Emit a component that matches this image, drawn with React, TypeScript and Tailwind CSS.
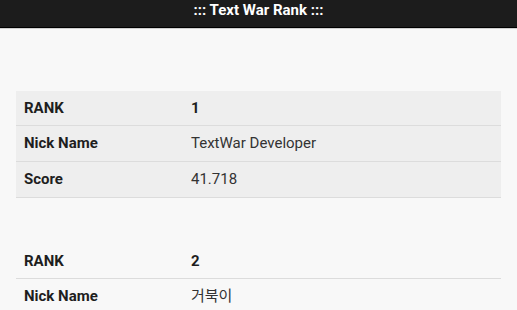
import React from "react";

const rows = [
  { rank: "1", nick: "TextWar Developer", score: "41.718", bg: "bg-[#eeeeee]", line: "border-[#dcdcdc]" },
  { rank: "2", nick: "거북이", score: "", bg: "bg-[#f8f8f8]", line: "border-[#efefef]" },
];

function Row({ label, value, line }: { label: string; value: string; line: string }) {
  return (
    <div className={`flex h-[36px] items-center border-b ${line}`}>
      <div className="w-[175px] pl-[8px] font-bold text-[15px] text-[#1e1e1e]">{label}</div>
      <div className="text-[15px] text-[#333333]">{value}</div>
    </div>
  );
}

export default function App() {
  return (
    <div
      className="h-[310px] w-[517px] overflow-hidden bg-[#f8f8f8]"
      style={{ fontFamily: "Roboto, 'Noto Sans CJK KR', sans-serif" }}
    >
      <div className="flex h-[28px] items-center justify-center border-b border-black bg-[#1c1c1c] pb-[6px] text-[15px] font-bold text-white">
        ::: Text War Rank :::
      </div>
      <div className="h-px bg-[#cfcfcf]" />
      <div className="flex flex-col gap-[46px] px-[16px] pt-[62px]">
        {rows.map((r) => (
          <div key={r.rank} className={r.bg}>
            <div className="flex h-[35px] items-center border-b border-[#dcdcdc]">
              <div className="w-[175px] pl-[8px] font-bold text-[15px] text-[#1e1e1e]">RANK</div>
              <div className="font-bold text-[15px] text-[#1e1e1e]">{r.rank}</div>
            </div>
            <Row label="Nick Name" value={r.nick} line={r.line} />
            <Row label="Score" value={r.score} line={r.line} />
          </div>
        ))}
      </div>
    </div>
  );
}
